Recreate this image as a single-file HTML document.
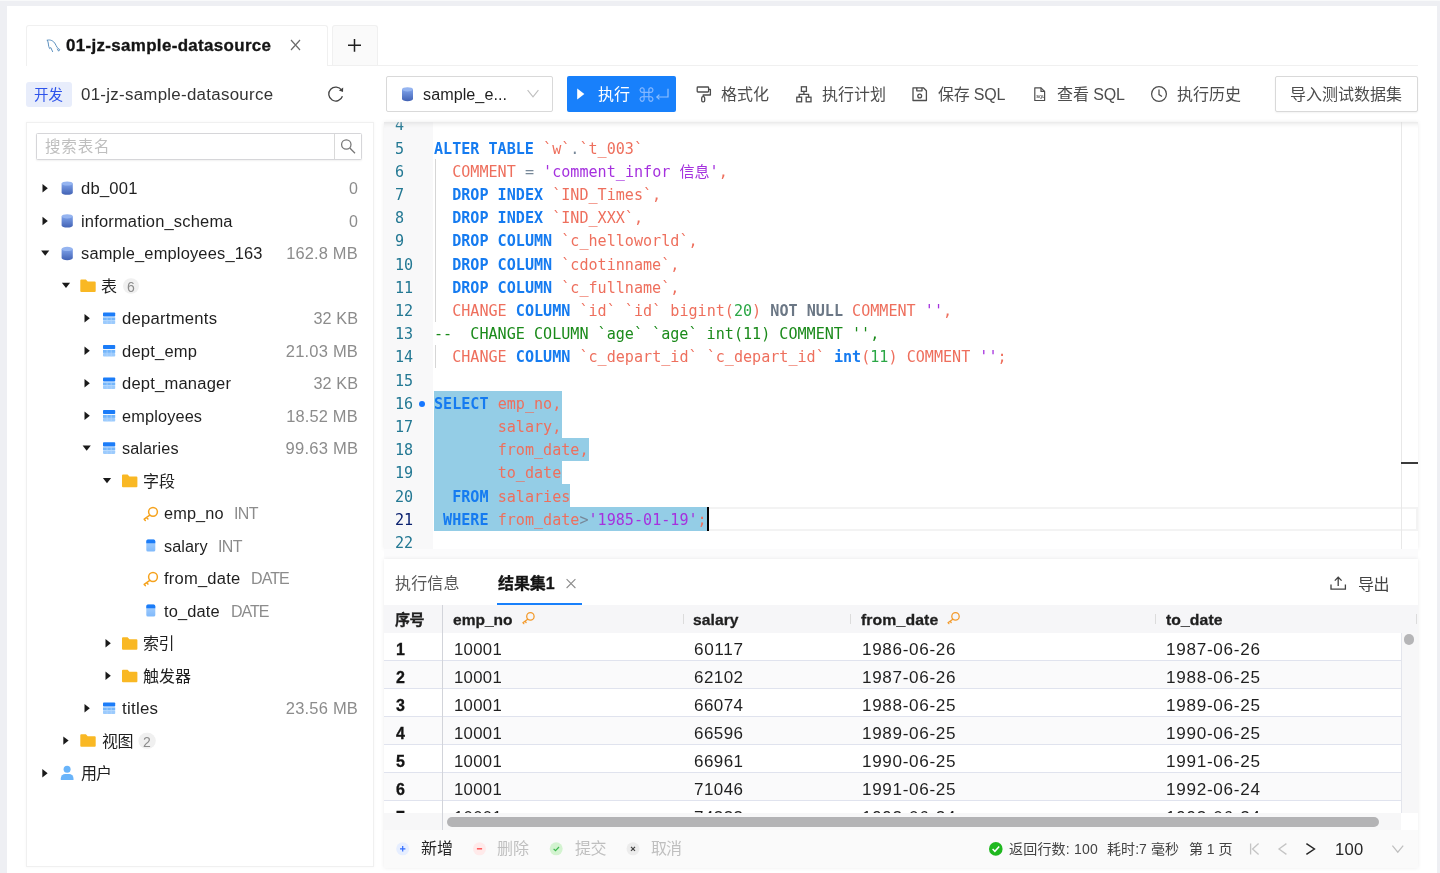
<!DOCTYPE html>
<html lang="zh-CN">
<head>
<meta charset="utf-8">
<title>SQL Console</title>
<style>
*{box-sizing:border-box;margin:0;padding:0}
html,body{width:1440px;height:873px;overflow:hidden}
body{background:#eeeff3;font-family:"Liberation Sans","Noto Sans CJK SC",sans-serif;color:#262626;position:relative;font-size:16px}
.a{position:absolute}
.tx{position:absolute;white-space:nowrap;line-height:24px;height:24px;will-change:transform}
.b{font-weight:bold;-webkit-text-stroke:0.3px currentColor}
#panel{left:7px;top:6px;width:1430px;height:867px;background:#fff}
#topline{left:0;top:0;width:1440px;height:1px;background:#f8f9fa}
#tabline{left:26px;top:65px;width:1392px;height:1px;background:#f0f0f0}
#tab1{left:26px;top:25px;width:302px;height:41px;background:#fff;border:1px solid #f0f0f0;border-bottom:none;border-radius:3px 3px 0 0}
#tab2{left:332px;top:25px;width:46px;height:40px;background:#fafafa;border:1px solid #f0f0f0;border-bottom:none;border-radius:3px 3px 0 0}
#badge{left:26px;top:82px;width:46px;height:25px;background:#e8edfb;border-radius:3px}
#tree{left:26px;top:122px;width:348px;height:745px;background:#fff;border:1px solid #f0f0f0;box-shadow:0 0 3px rgba(0,0,0,.04)}
#search{left:36px;top:133px;width:326px;height:27px;border:1px solid #d6d6d9;border-radius:1.5px;background:#fff;box-shadow:0 1px 2px rgba(0,0,0,.06)}
#searchbtn{left:334px;top:134px;width:1px;height:25px;background:#d9d9d9}
#selbox{left:386px;top:76px;width:167px;height:36px;border:1px solid #d9d9d9;border-radius:2px;background:#fff}
#runbtn{left:567px;top:76px;width:109px;height:36px;border-radius:2px;background:#1880fb}
#impbtn{left:1275px;top:76px;width:143px;height:36px;border:1px solid #d9d9d9;border-radius:2px;background:#fff;box-shadow:0 1px 2px rgba(0,0,0,.05)}
#tbshadow{left:384px;top:122px;width:1034px;height:6px;box-shadow:#d4d4d4 0 6px 6px -6px inset}
#editor{left:384px;top:122px;width:1034px;height:427px;background:#fff;overflow:hidden;box-shadow:0 0 4px rgba(0,0,0,.08)}
#gutter{left:0;top:0;width:49px;height:427px;background:#f8f8f9}
#edgap{left:384px;top:549px;width:1034px;height:10px;background:#fbfbfc}
#ruler{left:1017px;top:0;width:1px;height:427px;background:#e8e8e8}
#rulermark{left:1017px;top:339.5px;width:17px;height:2px;background:#3a3a3a}
.ln{position:absolute;left:10.6px;font-family:"DejaVu Sans Mono","Liberation Mono","Noto Sans CJK SC",monospace;font-size:15.1px;color:#237893;line-height:23.2px;height:23.2px;white-space:pre;will-change:transform}
.cl{position:absolute;left:50px;font-family:"DejaVu Sans Mono","Liberation Mono","Noto Sans CJK SC",monospace;font-size:15.1px;line-height:23.2px;height:23.2px;white-space:pre;color:#444;will-change:transform}
.k{color:#157bf0;font-weight:bold}
.i{color:#ee6f5d}
.s{color:#a531de}
.n{color:#2aa745}
.c{color:#1a8a1a}
.o{color:#778899}
.ob{color:#6b7785;font-weight:bold}
.sel{position:absolute;left:50px;background:#94cde6;height:23.4px}
.guide{position:absolute;left:50.5px;width:1px;background:#d6d6d6}
#curline{left:50px;top:385px;width:984px;height:23.4px;border:2px solid #f3f3f3}
#cursor{left:322.5px;top:385px;width:2px;height:23.4px;background:#000}
#result{left:384px;top:559px;width:1034px;height:309px;background:#fff;box-shadow:0 0 4px rgba(0,0,0,.08)}
#inkbar{left:497px;top:602.5px;width:85px;height:2.5px;background:#1880fb}
#thead{left:384px;top:604.5px;width:1034px;height:28.5px;background:#f6f6f8}
.rw{position:absolute;left:384px;width:1016.5px;height:28px;border-bottom:1px solid #e0e3ee}
.alt{background:#fafafb}
#vdiv{left:442px;top:605px;width:1px;height:225px;background:#d2d4da}
.tick{position:absolute;top:614px;width:1px;height:10px;background:#dcdcdc}
#vtrack{left:1400.5px;top:633px;width:17.5px;height:180px;background:#f7f7f8;border-left:1px solid #e3e5ec}
#vthumb{left:1404px;top:634px;width:10px;height:11px;border-radius:5px;background:#b5b5b7}
#htrack{left:384px;top:813px;width:1034px;height:17px;background:#f7f7f8}
#hcorner{left:1400.5px;top:813px;width:17.5px;height:17px;background:#fff}
#hthumb{left:447px;top:817px;width:932px;height:9.5px;border-radius:5px;background:#b3b3b5}
#foot{left:384px;top:830px;width:1034px;height:38px;background:#fafafa}
#clip7{left:384px;top:801px;width:1016px;height:12px;overflow:hidden}
.cir{position:absolute;width:13px;height:13px;border-radius:50%}
svg{position:absolute;overflow:visible}

</style>
</head>
<body>
<div class="a" id="topline"></div><div class="a" id="panel"></div>
<div class="a" id="tabline"></div><div class="a" id="tab1"></div><div class="a" id="tab2"></div>
<div class="a" id="badge"></div>
<div class="a" id="tree"></div><div class="a" id="search"></div><div class="a" id="searchbtn"></div>
<div class="a" id="selbox"></div><div class="a" id="runbtn"></div><div class="a" id="impbtn"></div>
<div class="a" id="editor"><div class="a" id="gutter"></div>
<div class="a" id="curline" style="top:385.2px"></div>
<div class="sel" style="top:269.2px;width:128.0px"></div>
<div class="sel" style="top:292.4px;width:128.0px"></div>
<div class="sel" style="top:315.6px;width:155.0px"></div>
<div class="sel" style="top:338.8px;width:128.0px"></div>
<div class="sel" style="top:362.0px;width:136.0px"></div>
<div class="sel" style="top:385.2px;width:272.5px"></div>
<div class="guide" style="top:37.2px;height:162.4px"></div>
<div class="guide" style="top:222.8px;height:23.2px"></div>
<div class="ln" style="top:-7.7px">4</div>
<div class="ln" style="top:15.5px">5</div>
<div class="cl" style="top:15.5px"><span class="k">ALTER TABLE</span> <span class="i">`w`</span><span class="o">.</span><span class="i">`t_003`</span></div>
<div class="ln" style="top:38.7px">6</div>
<div class="cl" style="top:38.7px">  <span class="i">COMMENT</span> <span class="o">=</span> <span class="s">'comment_infor 信息'</span><span class="i">,</span></div>
<div class="ln" style="top:61.9px">7</div>
<div class="cl" style="top:61.9px">  <span class="k">DROP INDEX</span> <span class="i">`IND_Times`,</span></div>
<div class="ln" style="top:85.1px">8</div>
<div class="cl" style="top:85.1px">  <span class="k">DROP INDEX</span> <span class="i">`IND_XXX`,</span></div>
<div class="ln" style="top:108.3px">9</div>
<div class="cl" style="top:108.3px">  <span class="k">DROP COLUMN</span> <span class="i">`c_helloworld`,</span></div>
<div class="ln" style="top:131.5px">10</div>
<div class="cl" style="top:131.5px">  <span class="k">DROP COLUMN</span> <span class="i">`cdotinname`,</span></div>
<div class="ln" style="top:154.7px">11</div>
<div class="cl" style="top:154.7px">  <span class="k">DROP COLUMN</span> <span class="i">`c_fullname`,</span></div>
<div class="ln" style="top:177.9px">12</div>
<div class="cl" style="top:177.9px">  <span class="i">CHANGE</span> <span class="k">COLUMN</span> <span class="i">`id` `id` bigint(</span><span class="n">20</span><span class="i">)</span> <span class="ob">NOT NULL</span> <span class="i">COMMENT</span> <span class="s">''</span><span class="i">,</span></div>
<div class="ln" style="top:201.1px">13</div>
<div class="cl" style="top:201.1px"><span class="c">--  CHANGE COLUMN `age` `age` int(11) COMMENT '',</span></div>
<div class="ln" style="top:224.3px">14</div>
<div class="cl" style="top:224.3px">  <span class="i">CHANGE</span> <span class="k">COLUMN</span> <span class="i">`c_depart_id` `c_depart_id`</span> <span class="k">int</span><span class="i">(</span><span class="n">11</span><span class="i">)</span> <span class="i">COMMENT</span> <span class="s">''</span><span class="i">;</span></div>
<div class="ln" style="top:247.5px">15</div>
<div class="ln" style="top:270.7px">16</div>
<div class="cl" style="top:270.7px"><span class="k">SELECT</span> <span class="i">emp_no,</span></div>
<div class="ln" style="top:293.9px">17</div>
<div class="cl" style="top:293.9px">       <span class="i">salary,</span></div>
<div class="ln" style="top:317.1px">18</div>
<div class="cl" style="top:317.1px">       <span class="i">from_date,</span></div>
<div class="ln" style="top:340.3px">19</div>
<div class="cl" style="top:340.3px">       <span class="i">to_date</span></div>
<div class="ln" style="top:363.5px">20</div>
<div class="cl" style="top:363.5px">  <span class="k">FROM</span> <span class="i">salaries</span></div>
<div class="ln" style="top:386.7px;color:#0b216f">21</div>
<div class="cl" style="top:386.7px"> <span class="k">WHERE</span> <span class="i">from_date</span><span class="o">&gt;</span><span class="s">'1985-01-19'</span><span class="i">;</span></div>
<div class="ln" style="top:409.9px">22</div>
<div class="a" style="left:34.5px;top:278.7px;width:6px;height:6px;border-radius:50%;background:#1677ff"></div>
<div class="a" id="cursor" style="top:385.2px"></div>
<div class="a" id="ruler"></div><div class="a" id="rulermark"></div>
</div>
<div class="a" id="tbshadow"></div>
<div class="a" id="edgap"></div>
<div class="a" id="result"></div><div class="a" id="inkbar"></div><div class="a" id="thead"></div>
<div class="rw" style="top:633.00px"></div>
<div class="rw alt" style="top:660.95px"></div>
<div class="rw" style="top:688.90px"></div>
<div class="rw alt" style="top:716.85px"></div>
<div class="rw" style="top:744.80px"></div>
<div class="rw alt" style="top:772.75px"></div>
<div class="rw" style="top:800.70px"></div>
<span id="t85" class="tx b" style="top:805.5px;font-size:16px;color:#141414;left:396px;">7</span>
<span id="t86" class="tx" style="top:805.5px;font-size:16px;color:#1f1f1f;left:454px;letter-spacing:0.307px;transform:scaleX(1.0431);transform-origin:left 50%;">10001</span>
<span id="t87" class="tx" style="top:805.5px;font-size:16px;color:#1f1f1f;left:693.5px;letter-spacing:0.424px;transform:scaleX(1.0607);transform-origin:left 50%;">74333</span>
<span id="t88" class="tx" style="top:805.5px;font-size:16px;color:#1f1f1f;left:862px;letter-spacing:0.615px;transform:scaleX(1.0700);transform-origin:left 50%;">1992-06-24</span>
<span id="t89" class="tx" style="top:805.5px;font-size:16px;color:#1f1f1f;left:1166px;letter-spacing:0.667px;transform:scaleX(1.0700);transform-origin:left 50%;">1993-06-24</span>
<div class="a" id="vtrack"></div><div class="a" id="vthumb"></div>
<div class="a" id="htrack"></div><div class="a" id="hcorner"></div><div class="a" id="hthumb"></div>
<div class="a" id="vdiv"></div>
<div class="tick" style="left:683px"></div>
<div class="tick" style="left:850px"></div>
<div class="tick" style="left:1155px"></div>
<div class="tick" style="left:1416px"></div>
<div class="a" id="foot"></div>
<svg class="a" style="left:0;top:0" width="1440" height="873" viewBox="0 0 1440 873">
<defs><linearGradient id="dbg" x1="0" y1="0" x2="0" y2="1"><stop offset="0" stop-color="#7ea2ea"/><stop offset="1" stop-color="#4262b4"/></linearGradient><linearGradient id="colg" x1="0" y1="0" x2="0" y2="1"><stop offset="0" stop-color="#a9d0fd"/><stop offset="1" stop-color="#7fb9fb"/></linearGradient></defs>
<g fill="none" stroke="#5b8fbe" stroke-width="1" stroke-linecap="round" stroke-linejoin="round"><path d="M47.3 40.2 C50.5 39.3 53.5 40.8 55.3 44 C56.6 46.4 57.2 48.3 59.8 49.6 L58.6 51.2 L57.4 49 "/><path d="M47.3 40.2 C49 42.5 47.8 45.5 49.6 48.6 L50.8 47.6 L52.6 51.6"/></g>
<path d="M291 40 L300 50 M300 40 L291 50" stroke="#6b6b6b" stroke-width="1.2" fill="none"/>
<path d="M348 45.3 H361 M354.5 38.9 V51.7" stroke="#1f1f1f" stroke-width="1.5" fill="none"/>
<path d="M341.6 90.2 A7 7 0 1 0 342.4 96.2" stroke="#434343" stroke-width="1.3" fill="none"/><path d="M343.2 87.6 L343 92 L338.9 90.6 Z" fill="#434343"/>
<path d="M402.0 89.3 V99.1 A5.5 2.1 0 0 0 413.0 99.1 V89.3 Z" fill="url(#dbg)"/>
<ellipse cx="407.5" cy="89.3" rx="5.5" ry="2.1" fill="#95b4f0"/>
<path d="M527.6 90.2 L533 96.8 L538.4 90.2" stroke="#bfbfbf" stroke-width="1.1" fill="none"/>
<path d="M577.2 88.6 L584.4 94.1 L577.2 99.6 Z" fill="#fff"/>
<path d="M668 88.8 V97 H657" stroke="#8fc0ff" stroke-width="1.2" fill="none"/><path d="M659.4 94.6 L656.8 97 L659.4 99.4" stroke="#8fc0ff" stroke-width="1.2" fill="none"/>
<g fill="none" stroke="#4d4d4d" stroke-width="1.3" stroke-linejoin="round"><rect x="697.2" y="87" width="11.4" height="5" rx="0.8"/><path d="M708.6 89.4 H710.4 V95 H703.2 V96.6"/><rect x="701.7" y="96.6" width="3" height="5.2" rx="1.3"/></g>
<g fill="none" stroke="#4d4d4d" stroke-width="1.3"><rect x="801.4" y="86.8" width="5" height="4.6"/><rect x="796.8" y="97.2" width="4.8" height="4.6"/><rect x="806.2" y="97.2" width="4.8" height="4.6"/><path d="M803.9 91.4 V94.4 M799.2 97.2 V94.4 H808.6 V97.2"/></g>
<g fill="none" stroke="#4d4d4d" stroke-width="1.3" stroke-linejoin="round"><path d="M913 87.8 H923.4 L926.4 90.8 V100.5 H913 Z"/><path d="M916.8 87.8 V90.8 H922 V87.8"/><circle cx="919.7" cy="96" r="1.9"/></g>
<g fill="none" stroke="#4d4d4d" stroke-width="1.2" stroke-linejoin="round"><path d="M1034.8 87.8 H1041 L1044.6 91.4 V100.5 H1034.8 Z"/><path d="M1041 87.8 V91.4 H1044.6"/></g>
<text x="1036.3" y="97.6" font-family="Liberation Sans,sans-serif" font-size="4.2" font-weight="bold" fill="#4d4d4d">SQL</text>
<g fill="none" stroke="#4d4d4d" stroke-width="1.25"><circle cx="1159" cy="94" r="7.4"/><path d="M1159 89.4 V94.6 L1162 96.6"/></g>
<g fill="none" stroke="#757575" stroke-width="1.25"><circle cx="346.3" cy="144.5" r="4.7"/><path d="M349.8 148 L355 153.2"/></g>
<path d="M42.5 184.0 L47.8 188.2 L42.5 192.4 Z" fill="#1a1a1a"/>
<path d="M42.5 216.8 L47.8 221.0 L42.5 225.2 Z" fill="#1a1a1a"/>
<path d="M41.1 250.5 L49.3 250.5 L45.2 255.7 Z" fill="#1a1a1a"/>
<path d="M61.9 282.8 L70.1 282.8 L66.0 288.0 Z" fill="#1a1a1a"/>
<path d="M84.5 314.1 L89.8 318.3 L84.5 322.5 Z" fill="#1a1a1a"/>
<path d="M84.5 346.6 L89.8 350.8 L84.5 355.0 Z" fill="#1a1a1a"/>
<path d="M84.5 379.1 L89.8 383.3 L84.5 387.5 Z" fill="#1a1a1a"/>
<path d="M84.5 411.6 L89.8 415.8 L84.5 420.0 Z" fill="#1a1a1a"/>
<path d="M84.5 704.1 L89.8 708.3 L84.5 712.5 Z" fill="#1a1a1a"/>
<path d="M82.6 445.5 L90.8 445.5 L86.7 450.7 Z" fill="#1a1a1a"/>
<path d="M102.9 478.0 L111.1 478.0 L107.0 483.2 Z" fill="#1a1a1a"/>
<path d="M105.5 639.1 L110.8 643.3 L105.5 647.5 Z" fill="#1a1a1a"/>
<path d="M105.5 671.6 L110.8 675.8 L105.5 680.0 Z" fill="#1a1a1a"/>
<path d="M63.3 736.4 L68.6 740.6 L63.3 744.8 Z" fill="#1a1a1a"/>
<path d="M42.3 769.0 L47.6 773.2 L42.3 777.4 Z" fill="#1a1a1a"/>
<path d="M61.6 183.5 V192.7 A5.6 2.1 0 0 0 72.8 192.7 V183.5 Z" fill="url(#dbg)"/>
<ellipse cx="67.2" cy="183.5" rx="5.6" ry="2.1" fill="#95b4f0"/>
<path d="M61.6 216.3 V225.5 A5.6 2.1 0 0 0 72.8 225.5 V216.3 Z" fill="url(#dbg)"/>
<ellipse cx="67.2" cy="216.3" rx="5.6" ry="2.1" fill="#95b4f0"/>
<path d="M61.6 248.9 V258.1 A5.6 2.1 0 0 0 72.8 258.1 V248.9 Z" fill="url(#dbg)"/>
<ellipse cx="67.2" cy="248.9" rx="5.6" ry="2.1" fill="#95b4f0"/>
<path d="M80.3 280.5 a1 1 0 0 1 1 -1 h4.6 l1.8 2 h7 a1 1 0 0 1 1 1 v8.6 a1 1 0 0 1 -1 1 h-13.4 a1 1 0 0 1 -1 -1 Z" fill="#f9b824"/>
<path d="M122.0 475.6 a1 1 0 0 1 1 -1 h4.6 l1.8 2 h7 a1 1 0 0 1 1 1 v8.6 a1 1 0 0 1 -1 1 h-13.4 a1 1 0 0 1 -1 -1 Z" fill="#f9b824"/>
<path d="M122.0 638.2 a1 1 0 0 1 1 -1 h4.6 l1.8 2 h7 a1 1 0 0 1 1 1 v8.6 a1 1 0 0 1 -1 1 h-13.4 a1 1 0 0 1 -1 -1 Z" fill="#f9b824"/>
<path d="M122.0 670.7 a1 1 0 0 1 1 -1 h4.6 l1.8 2 h7 a1 1 0 0 1 1 1 v8.6 a1 1 0 0 1 -1 1 h-13.4 a1 1 0 0 1 -1 -1 Z" fill="#f9b824"/>
<path d="M80.3 735.2 a1 1 0 0 1 1 -1 h4.6 l1.8 2 h7 a1 1 0 0 1 1 1 v8.6 a1 1 0 0 1 -1 1 h-13.4 a1 1 0 0 1 -1 -1 Z" fill="#f9b824"/>
<rect x="103.0" y="312.4" width="12.2" height="4.2" rx="0.8" fill="#1b7cf8"/>
<rect x="103.0" y="317.4" width="12.2" height="3" fill="#74b6fb"/>
<rect x="103.0" y="320.6" width="12.2" height="3.4" rx="0.8" fill="#9ccbfd"/>
<path d="M107.1 317.4 v6.6 M111.2 317.4 v6.6" stroke="#b9dafd" stroke-width="0.6"/>
<rect x="103.0" y="344.9" width="12.2" height="4.2" rx="0.8" fill="#1b7cf8"/>
<rect x="103.0" y="349.9" width="12.2" height="3" fill="#74b6fb"/>
<rect x="103.0" y="353.1" width="12.2" height="3.4" rx="0.8" fill="#9ccbfd"/>
<path d="M107.1 349.9 v6.6 M111.2 349.9 v6.6" stroke="#b9dafd" stroke-width="0.6"/>
<rect x="103.0" y="377.4" width="12.2" height="4.2" rx="0.8" fill="#1b7cf8"/>
<rect x="103.0" y="382.4" width="12.2" height="3" fill="#74b6fb"/>
<rect x="103.0" y="385.6" width="12.2" height="3.4" rx="0.8" fill="#9ccbfd"/>
<path d="M107.1 382.4 v6.6 M111.2 382.4 v6.6" stroke="#b9dafd" stroke-width="0.6"/>
<rect x="103.0" y="409.9" width="12.2" height="4.2" rx="0.8" fill="#1b7cf8"/>
<rect x="103.0" y="414.9" width="12.2" height="3" fill="#74b6fb"/>
<rect x="103.0" y="418.1" width="12.2" height="3.4" rx="0.8" fill="#9ccbfd"/>
<path d="M107.1 414.9 v6.6 M111.2 414.9 v6.6" stroke="#b9dafd" stroke-width="0.6"/>
<rect x="103.0" y="442.3" width="12.2" height="4.2" rx="0.8" fill="#1b7cf8"/>
<rect x="103.0" y="447.3" width="12.2" height="3" fill="#74b6fb"/>
<rect x="103.0" y="450.5" width="12.2" height="3.4" rx="0.8" fill="#9ccbfd"/>
<path d="M107.1 447.3 v6.6 M111.2 447.3 v6.6" stroke="#b9dafd" stroke-width="0.6"/>
<rect x="103.0" y="702.4" width="12.2" height="4.2" rx="0.8" fill="#1b7cf8"/>
<rect x="103.0" y="707.4" width="12.2" height="3" fill="#74b6fb"/>
<rect x="103.0" y="710.6" width="12.2" height="3.4" rx="0.8" fill="#9ccbfd"/>
<path d="M107.1 707.4 v6.6 M111.2 707.4 v6.6" stroke="#b9dafd" stroke-width="0.6"/>
<g fill="none" stroke="#f5a21d" stroke-width="1.50" stroke-linecap="round"><circle cx="153.0" cy="511.8" r="4.4"/><path d="M149.8 515.1 L144.2 519.2 M146.6 517.4 l1.3 1.5 M144.2 519.2 l1.1 1.2"/></g>
<g fill="none" stroke="#f5a21d" stroke-width="1.50" stroke-linecap="round"><circle cx="153.0" cy="577.0" r="4.4"/><path d="M149.8 580.3 L144.2 584.4 M146.6 582.6 l1.3 1.5 M144.2 584.4 l1.1 1.2"/></g>
<rect x="146.3" y="539.6" width="9" height="12" rx="1.6" fill="url(#colg)"/>
<path d="M146.3 541.2 a1.6 1.6 0 0 1 1.6 -1.6 h5.8 a1.6 1.6 0 0 1 1.6 1.6 v2 h-9 Z" fill="#1b7cf8"/>
<rect x="146.3" y="604.6" width="9" height="12" rx="1.6" fill="url(#colg)"/>
<path d="M146.3 606.2 a1.6 1.6 0 0 1 1.6 -1.6 h5.8 a1.6 1.6 0 0 1 1.6 1.6 v2 h-9 Z" fill="#1b7cf8"/>
<circle cx="67.1" cy="769.3" r="3.5" fill="#69b4fa"/><path d="M60.8 780 v-1.6 a4.4 4.4 0 0 1 4.4 -4.4 h3.9 a4.4 4.4 0 0 1 4.4 4.4 v1.6 Z" fill="#69b4fa"/>
<rect x="123" y="278.2" width="16" height="15.6" rx="7.8" fill="#f0f0f0"/>
<rect x="138.4" y="732.8" width="17.4" height="16" rx="8" fill="#f0f0f0"/>
<path d="M566.6 579.2 L575.4 588 M575.4 579.2 L566.6 588" stroke="#8c8c8c" stroke-width="1.1" fill="none"/>
<g fill="none" stroke="#434343" stroke-width="1.3"><path d="M1331 584.6 V589.2 H1345.4 V584.6"/><path d="M1338.2 586 V577.4 M1334.8 580.6 L1338.2 577.2 L1341.6 580.6"/></g>
<g fill="none" stroke="#f39a2b" stroke-width="1.27" stroke-linecap="round"><circle cx="530.4" cy="616.4" r="3.7"/><path d="M527.7 619.2 L522.9 622.7 M525.0 621.2 l1.1 1.3 M522.9 622.7 l0.9 1.0"/></g>
<g fill="none" stroke="#f39a2b" stroke-width="1.27" stroke-linecap="round"><circle cx="955.5" cy="616.4" r="3.7"/><path d="M952.8 619.2 L948.0 622.7 M950.1 621.2 l1.1 1.3 M948.0 622.7 l0.9 1.0"/></g>
<circle cx="402.7" cy="848.8" r="6.5" fill="#e6eeff"/><path d="M400 848.8 H405.4 M402.7 846.1 V851.5" stroke="#2f6bff" stroke-width="1.2"/>
<circle cx="479.5" cy="848.8" r="6.5" fill="#ffeaea"/><path d="M476.9 848.8 H482.1" stroke="#ff4d4f" stroke-width="1.4"/>
<circle cx="556.2" cy="848.8" r="6.5" fill="#d3f3d0"/><path d="M553.6 848.8 L555.5 850.7 L559 847" stroke="#3fb950" stroke-width="1.2" fill="none"/>
<circle cx="633" cy="848.8" r="6.5" fill="#ececec"/><path d="M631 846.8 L635 850.8 M635 846.8 L631 850.8" stroke="#444" stroke-width="1.2"/>
<circle cx="995.8" cy="848.9" r="6.8" fill="#1fb81f"/><path d="M992.6 848.9 L994.9 851.3 L999.2 846.6" stroke="#fff" stroke-width="1.5" fill="none"/>
<g fill="none" stroke="#c4c4c4" stroke-width="1.3"><path d="M1250.6 843.6 V854.4 M1258.6 843.6 L1252.6 849 L1258.6 854.4"/><path d="M1286.4 843.6 L1279 849 L1286.4 854.4"/></g>
<path d="M1306.4 843.6 L1314.4 849 L1306.4 854.4" fill="none" stroke="#262626" stroke-width="1.5"/>
<path d="M1392.4 845.6 L1397.8 852.2 L1403.2 845.6" fill="none" stroke="#bfbfbf" stroke-width="1.2"/>
</svg>
<span id="t0" class="tx b" style="top:34.3px;font-size:16px;color:#141414;left:66px;letter-spacing:0.314px;transform:scaleX(1.0587);transform-origin:left 50%;">01-jz-sample-datasource</span>
<span id="t1" class="tx" style="top:83.3px;font-size:14.5px;color:#2f54eb;left:34px;">开发</span>
<span id="t2" class="tx" style="top:83.3px;font-size:16px;color:#333;left:81px;letter-spacing:0.275px;transform:scaleX(1.0543);transform-origin:left 50%;">01-jz-sample-datasource</span>
<span id="t3" class="tx" style="top:135.3px;font-size:15.5px;color:#bfbfbf;left:45px;letter-spacing:0.828px;">搜索表名</span>
<span id="t4" class="tx" style="top:177.0px;font-size:16px;color:#1f1f1f;left:80.5px;letter-spacing:0.240px;transform:scaleX(1.0349);transform-origin:left 50%;">db_001</span>
<span id="t5" class="tx" style="top:177.0px;font-size:16px;color:#8c8c8c;right:1082px;margin-right:0.000px;">0</span>
<span id="t6" class="tx" style="top:209.8px;font-size:16px;color:#1f1f1f;left:80.5px;letter-spacing:0.169px;transform:scaleX(1.0309);transform-origin:left 50%;">information_schema</span>
<span id="t7" class="tx" style="top:209.8px;font-size:16px;color:#8c8c8c;right:1082px;margin-right:0.000px;">0</span>
<span id="t8" class="tx" style="top:242.4px;font-size:16px;color:#1f1f1f;left:80.5px;letter-spacing:0.165px;transform:scaleX(1.0278);transform-origin:left 50%;">sample_employees_163</span>
<span id="t9" class="tx" style="top:242.4px;font-size:16px;color:#8c8c8c;right:1082px;margin-right:-0.172px;letter-spacing:0.168px;transform:scaleX(1.0264);transform-origin:right 50%;">162.8 MB</span>
<span id="t10" class="tx" style="top:307.3px;font-size:16px;color:#1f1f1f;left:122px;letter-spacing:0.233px;transform:scaleX(1.0409);transform-origin:left 50%;">departments</span>
<span id="t11" class="tx" style="top:307.3px;font-size:16px;color:#8c8c8c;right:1082px;margin-right:-0.091px;letter-spacing:0.090px;transform:scaleX(1.0125);transform-origin:right 50%;">32 KB</span>
<span id="t12" class="tx" style="top:339.6px;font-size:16px;color:#1f1f1f;left:122px;letter-spacing:0.212px;transform:scaleX(1.0323);transform-origin:left 50%;">dept_emp</span>
<span id="t13" class="tx" style="top:339.6px;font-size:16px;color:#8c8c8c;right:1082px;margin-right:-0.201px;letter-spacing:0.195px;transform:scaleX(1.0308);transform-origin:right 50%;">21.03 MB</span>
<span id="t14" class="tx" style="top:372.1px;font-size:16px;color:#1f1f1f;left:122px;letter-spacing:0.204px;transform:scaleX(1.0338);transform-origin:left 50%;">dept_manager</span>
<span id="t15" class="tx" style="top:372.1px;font-size:16px;color:#8c8c8c;right:1082px;margin-right:-0.091px;letter-spacing:0.090px;transform:scaleX(1.0125);transform-origin:right 50%;">32 KB</span>
<span id="t16" class="tx" style="top:404.6px;font-size:16px;color:#1f1f1f;left:122px;letter-spacing:0.129px;transform:scaleX(1.0204);transform-origin:left 50%;">employees</span>
<span id="t17" class="tx" style="top:404.6px;font-size:16px;color:#8c8c8c;right:1082px;margin-right:-0.172px;letter-spacing:0.168px;transform:scaleX(1.0264);transform-origin:right 50%;">18.52 MB</span>
<span id="t18" class="tx" style="top:437.0px;font-size:16px;color:#1f1f1f;left:122px;letter-spacing:0.077px;transform:scaleX(1.0148);transform-origin:left 50%;">salaries</span>
<span id="t19" class="tx" style="top:437.0px;font-size:16px;color:#8c8c8c;right:1082px;margin-right:-0.230px;letter-spacing:0.222px;transform:scaleX(1.0352);transform-origin:right 50%;">99.63 MB</span>
<span id="t20" class="tx" style="top:697.1px;font-size:16px;color:#1f1f1f;left:122px;letter-spacing:0.234px;transform:scaleX(1.0564);transform-origin:left 50%;">titles</span>
<span id="t21" class="tx" style="top:697.1px;font-size:16px;color:#8c8c8c;right:1082px;margin-right:-0.201px;letter-spacing:0.195px;transform:scaleX(1.0308);transform-origin:right 50%;">23.56 MB</span>
<span id="t22" class="tx" style="top:274.8px;font-size:16px;color:#1f1f1f;left:101px;">表</span>
<span id="t23" class="tx" style="top:275.0px;font-size:14px;color:#8c8c8c;left:127.3px;">6</span>
<span id="t24" class="tx" style="top:469.6px;font-size:16px;color:#1f1f1f;left:143px;letter-spacing:-0.016px;">字段</span>
<span id="t25" class="tx" style="top:502.0px;font-size:16px;color:#1f1f1f;left:164px;letter-spacing:0.131px;transform:scaleX(1.0173);transform-origin:left 50%;">emp_no</span>
<span id="t26" class="tx" style="top:502.0px;font-size:16px;color:#8c8c8c;left:234px;letter-spacing:-0.641px;">INT</span>
<span id="t27" class="tx" style="top:534.6px;font-size:16px;color:#1f1f1f;left:164px;letter-spacing:0.080px;transform:scaleX(1.0142);transform-origin:left 50%;">salary</span>
<span id="t28" class="tx" style="top:534.6px;font-size:16px;color:#8c8c8c;left:218px;letter-spacing:-0.641px;">INT</span>
<span id="t29" class="tx" style="top:567.1px;font-size:16px;color:#1f1f1f;left:164px;letter-spacing:0.201px;transform:scaleX(1.0346);transform-origin:left 50%;">from_date</span>
<span id="t30" class="tx" style="top:567.1px;font-size:16px;color:#8c8c8c;left:250.5px;letter-spacing:-0.928px;">DATE</span>
<span id="t31" class="tx" style="top:599.6px;font-size:16px;color:#1f1f1f;left:164px;letter-spacing:0.150px;transform:scaleX(1.0260);transform-origin:left 50%;">to_date</span>
<span id="t32" class="tx" style="top:599.6px;font-size:16px;color:#8c8c8c;left:230.5px;letter-spacing:-0.995px;">DATE</span>
<span id="t33" class="tx" style="top:632.1px;font-size:16px;color:#1f1f1f;left:143px;letter-spacing:-0.516px;">索引</span>
<span id="t34" class="tx" style="top:664.6px;font-size:16px;color:#1f1f1f;left:143px;letter-spacing:-0.008px;">触发器</span>
<span id="t35" class="tx" style="top:729.6px;font-size:16px;color:#1f1f1f;left:101.5px;letter-spacing:-0.516px;">视图</span>
<span id="t36" class="tx" style="top:729.8px;font-size:14px;color:#8c8c8c;left:143.2px;">2</span>
<span id="t37" class="tx" style="top:762.1px;font-size:16px;color:#1f1f1f;left:80.5px;letter-spacing:-1.016px;">用户</span>
<span id="t38" class="tx" style="top:83.3px;font-size:16px;color:#1f1f1f;left:423px;letter-spacing:0.051px;transform:scaleX(1.0093);transform-origin:left 50%;">sample_e...</span>
<span id="t39" class="tx" style="top:83.3px;font-size:16px;color:#fff;left:598px;letter-spacing:-0.016px;">执行</span>
<span id="t40" class="tx b" style="top:83.3px;font-size:15px;color:#8ebcff;left:638.5px;">⌘</span>
<span id="t41" class="tx" style="top:83.3px;font-size:16px;color:#4d4d4d;left:721px;letter-spacing:-0.008px;">格式化</span>
<span id="t42" class="tx" style="top:83.3px;font-size:16px;color:#4d4d4d;left:822px;letter-spacing:-0.005px;">执行计划</span>
<span id="t43" class="tx" style="top:83.3px;font-size:16px;color:#4d4d4d;left:937.5px;letter-spacing:-0.194px;">保存 SQL</span>
<span id="t44" class="tx" style="top:83.3px;font-size:16px;color:#4d4d4d;left:1057px;letter-spacing:-0.094px;">查看 SQL</span>
<span id="t45" class="tx" style="top:83.3px;font-size:16px;color:#4d4d4d;left:1177px;letter-spacing:-0.005px;">执行历史</span>
<span id="t46" class="tx" style="top:83.3px;font-size:16px;color:#4d4d4d;left:1290px;letter-spacing:-0.003px;">导入测试数据集</span>
<span id="t47" class="tx" style="top:572.3px;font-size:16px;color:#595959;left:395px;letter-spacing:0.161px;">执行信息</span>
<span id="t48" class="tx b" style="top:572.3px;font-size:16px;color:#141414;left:497.5px;letter-spacing:-0.069px;">结果集1</span>
<span id="t49" class="tx" style="top:572.8px;font-size:16px;color:#434343;left:1357.5px;letter-spacing:-0.516px;">导出</span>
<span id="t50" class="tx b" style="top:608.3px;font-size:15px;color:#1f1f1f;left:395px;letter-spacing:-0.516px;">序号</span>
<span id="t51" class="tx b" style="top:608.3px;font-size:15.5px;color:#1f1f1f;left:453px;letter-spacing:0.005px;transform:scaleX(1.0006);transform-origin:left 50%;">emp_no</span>
<span id="t52" class="tx b" style="top:608.3px;font-size:15.5px;color:#1f1f1f;left:693.3px;letter-spacing:0.053px;transform:scaleX(1.0090);transform-origin:left 50%;">salary</span>
<span id="t53" class="tx b" style="top:608.3px;font-size:15.5px;color:#1f1f1f;left:860.8px;letter-spacing:0.111px;transform:scaleX(1.0181);transform-origin:left 50%;">from_date</span>
<span id="t54" class="tx b" style="top:608.3px;font-size:15.5px;color:#1f1f1f;left:1165.5px;letter-spacing:0.090px;transform:scaleX(1.0150);transform-origin:left 50%;">to_date</span>
<span id="t55" class="tx b" style="top:638.1px;font-size:16px;color:#141414;left:396px;">1</span>
<span id="t56" class="tx" style="top:638.1px;font-size:16px;color:#1f1f1f;left:454px;letter-spacing:0.307px;transform:scaleX(1.0431);transform-origin:left 50%;">10001</span>
<span id="t57" class="tx" style="top:638.1px;font-size:16px;color:#1f1f1f;left:693.5px;letter-spacing:0.620px;transform:scaleX(1.0700);transform-origin:left 50%;">60117</span>
<span id="t58" class="tx" style="top:638.1px;font-size:16px;color:#1f1f1f;left:862px;letter-spacing:0.615px;transform:scaleX(1.0700);transform-origin:left 50%;">1986-06-26</span>
<span id="t59" class="tx" style="top:638.1px;font-size:16px;color:#1f1f1f;left:1166px;letter-spacing:0.667px;transform:scaleX(1.0700);transform-origin:left 50%;">1987-06-26</span>
<span id="t60" class="tx b" style="top:666.1px;font-size:16px;color:#141414;left:396px;">2</span>
<span id="t61" class="tx" style="top:666.1px;font-size:16px;color:#1f1f1f;left:454px;letter-spacing:0.307px;transform:scaleX(1.0431);transform-origin:left 50%;">10001</span>
<span id="t62" class="tx" style="top:666.1px;font-size:16px;color:#1f1f1f;left:693.5px;letter-spacing:0.424px;transform:scaleX(1.0607);transform-origin:left 50%;">62102</span>
<span id="t63" class="tx" style="top:666.1px;font-size:16px;color:#1f1f1f;left:862px;letter-spacing:0.615px;transform:scaleX(1.0700);transform-origin:left 50%;">1987-06-26</span>
<span id="t64" class="tx" style="top:666.1px;font-size:16px;color:#1f1f1f;left:1166px;letter-spacing:0.667px;transform:scaleX(1.0700);transform-origin:left 50%;">1988-06-25</span>
<span id="t65" class="tx b" style="top:694.1px;font-size:16px;color:#141414;left:396px;">3</span>
<span id="t66" class="tx" style="top:694.1px;font-size:16px;color:#1f1f1f;left:454px;letter-spacing:0.307px;transform:scaleX(1.0431);transform-origin:left 50%;">10001</span>
<span id="t67" class="tx" style="top:694.1px;font-size:16px;color:#1f1f1f;left:693.5px;letter-spacing:0.424px;transform:scaleX(1.0607);transform-origin:left 50%;">66074</span>
<span id="t68" class="tx" style="top:694.1px;font-size:16px;color:#1f1f1f;left:862px;letter-spacing:0.615px;transform:scaleX(1.0700);transform-origin:left 50%;">1988-06-25</span>
<span id="t69" class="tx" style="top:694.1px;font-size:16px;color:#1f1f1f;left:1166px;letter-spacing:0.667px;transform:scaleX(1.0700);transform-origin:left 50%;">1989-06-25</span>
<span id="t70" class="tx b" style="top:722.1px;font-size:16px;color:#141414;left:396px;">4</span>
<span id="t71" class="tx" style="top:722.1px;font-size:16px;color:#1f1f1f;left:454px;letter-spacing:0.307px;transform:scaleX(1.0431);transform-origin:left 50%;">10001</span>
<span id="t72" class="tx" style="top:722.1px;font-size:16px;color:#1f1f1f;left:693.5px;letter-spacing:0.424px;transform:scaleX(1.0607);transform-origin:left 50%;">66596</span>
<span id="t73" class="tx" style="top:722.1px;font-size:16px;color:#1f1f1f;left:862px;letter-spacing:0.615px;transform:scaleX(1.0700);transform-origin:left 50%;">1989-06-25</span>
<span id="t74" class="tx" style="top:722.1px;font-size:16px;color:#1f1f1f;left:1166px;letter-spacing:0.667px;transform:scaleX(1.0700);transform-origin:left 50%;">1990-06-25</span>
<span id="t75" class="tx b" style="top:749.7px;font-size:16px;color:#141414;left:396px;">5</span>
<span id="t76" class="tx" style="top:749.7px;font-size:16px;color:#1f1f1f;left:454px;letter-spacing:0.307px;transform:scaleX(1.0431);transform-origin:left 50%;">10001</span>
<span id="t77" class="tx" style="top:749.7px;font-size:16px;color:#1f1f1f;left:693.5px;letter-spacing:0.424px;transform:scaleX(1.0607);transform-origin:left 50%;">66961</span>
<span id="t78" class="tx" style="top:749.7px;font-size:16px;color:#1f1f1f;left:862px;letter-spacing:0.615px;transform:scaleX(1.0700);transform-origin:left 50%;">1990-06-25</span>
<span id="t79" class="tx" style="top:749.7px;font-size:16px;color:#1f1f1f;left:1166px;letter-spacing:0.667px;transform:scaleX(1.0700);transform-origin:left 50%;">1991-06-25</span>
<span id="t80" class="tx b" style="top:777.7px;font-size:16px;color:#141414;left:396px;">6</span>
<span id="t81" class="tx" style="top:777.7px;font-size:16px;color:#1f1f1f;left:454px;letter-spacing:0.307px;transform:scaleX(1.0431);transform-origin:left 50%;">10001</span>
<span id="t82" class="tx" style="top:777.7px;font-size:16px;color:#1f1f1f;left:693.5px;letter-spacing:0.424px;transform:scaleX(1.0607);transform-origin:left 50%;">71046</span>
<span id="t83" class="tx" style="top:777.7px;font-size:16px;color:#1f1f1f;left:862px;letter-spacing:0.615px;transform:scaleX(1.0700);transform-origin:left 50%;">1991-06-25</span>
<span id="t84" class="tx" style="top:777.7px;font-size:16px;color:#1f1f1f;left:1166px;letter-spacing:0.667px;transform:scaleX(1.0700);transform-origin:left 50%;">1992-06-24</span>
<span id="t90" class="tx" style="top:837.4px;font-size:16px;color:#262626;left:420.5px;letter-spacing:-0.016px;">新增</span>
<span id="t91" class="tx" style="top:837.4px;font-size:16px;color:#bfbfbf;left:497px;letter-spacing:-0.016px;">删除</span>
<span id="t92" class="tx" style="top:837.4px;font-size:16px;color:#bfbfbf;left:574.5px;letter-spacing:-0.516px;">提交</span>
<span id="t93" class="tx" style="top:837.4px;font-size:16px;color:#bfbfbf;left:651px;letter-spacing:-1.016px;">取消</span>
<span id="t94" class="tx" style="top:837.1px;font-size:14px;color:#434343;left:1008.5px;letter-spacing:0.207px;">返回行数: 100</span>
<span id="t95" class="tx" style="top:837.1px;font-size:14px;color:#434343;left:1107px;letter-spacing:0.070px;">耗时:7 毫秒</span>
<span id="t96" class="tx" style="top:837.1px;font-size:14px;color:#434343;left:1189.3px;letter-spacing:-0.045px;">第 1 页</span>
<span id="t97" class="tx" style="top:837.8px;font-size:16px;color:#262626;left:1335px;letter-spacing:0.308px;transform:scaleX(1.0359);transform-origin:left 50%;">100</span>
</body>
</html>
